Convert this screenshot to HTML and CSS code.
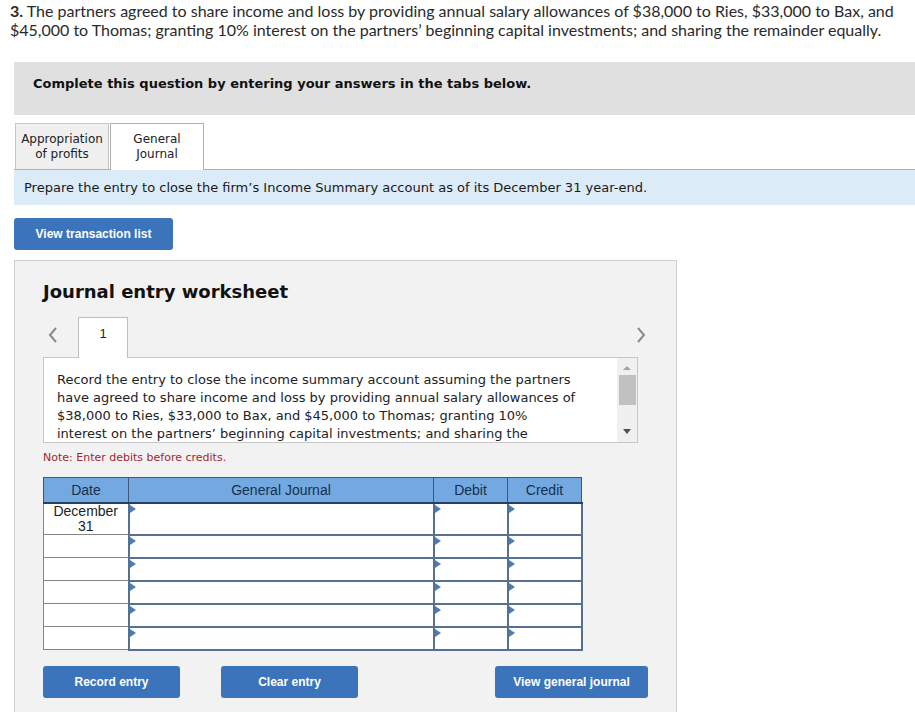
FILE: index.html
```html
<!DOCTYPE html>
<html lang="en">
<head>
  <meta charset="UTF-8">
  <title>Journal entry worksheet</title>
  <link rel="stylesheet" href="styles.css">
</head>
<body>

  <!-- Question text -->
  <p class="question"><b>3.</b> The partners agreed to share income and loss by providing annual salary allowances of $38,000 to Ries, $33,000 to Bax, and $45,000 to Thomas; granting 10% interest on the partners’ beginning capital investments; and sharing the remainder equally.</p>

  <div class="content">
    <div class="banner">Complete this question by entering your answers in the tabs below.</div>

    <!-- Tabs -->
    <div class="tabs">
      <div class="tab">Appropriation<br>of profits</div>
      <div class="tab active">General<br>Journal</div>
    </div>
    <div class="instructions">Prepare the entry to close the firm’s Income Summary account as of its December 31 year-end.</div>

    <button class="btn btn-list">View transaction list</button>

    <!-- Worksheet panel -->
    <div class="worksheet">
      <h2 class="ws-title">Journal entry worksheet</h2>

      <div class="pager">
        <span class="arrow">
          <svg width="10" height="16" viewBox="0 0 10 16"><path d="M8 1 L2 8 L8 15" fill="none" stroke="#8a8a8a" stroke-width="2"/></svg>
        </span>
        <div class="page-tab">1</div>
        <span class="arrow arrow-right">
          <svg width="10" height="16" viewBox="0 0 10 16"><path d="M2 1 L8 8 L2 15" fill="none" stroke="#8a8a8a" stroke-width="2"/></svg>
        </span>
      </div>

      <div class="textbox">
        <div class="textbox-text">Record the entry to close the income summary account assuming the partners have agreed to share income and loss by providing annual salary allowances of $38,000 to Ries, $33,000 to Bax, and $45,000 to Thomas; granting 10% interest on the partners’ beginning capital investments; and sharing the remainder equally.</div>
        <div class="scrollbar">
          <span class="sb-up"></span>
          <span class="sb-thumb"></span>
          <span class="sb-down"></span>
        </div>
      </div>

      <p class="note">Note: Enter debits before credits.</p>

      <table class="journal">
        <thead>
          <tr>
            <th class="col-date">Date</th>
            <th class="col-gj">General Journal</th>
            <th class="col-num">Debit</th>
            <th class="col-num">Credit</th>
          </tr>
        </thead>
        <tbody>
          <tr class="first">
            <td class="date">December<br>31</td>
            <td class="cell"></td><td class="cell"></td><td class="cell"></td>
          </tr>
          <tr><td class="date"></td><td class="cell"></td><td class="cell"></td><td class="cell"></td></tr>
          <tr><td class="date"></td><td class="cell"></td><td class="cell"></td><td class="cell"></td></tr>
          <tr><td class="date"></td><td class="cell"></td><td class="cell"></td><td class="cell"></td></tr>
          <tr><td class="date"></td><td class="cell"></td><td class="cell"></td><td class="cell"></td></tr>
          <tr><td class="date"></td><td class="cell"></td><td class="cell"></td><td class="cell"></td></tr>
        </tbody>
      </table>

      <div class="actions">
        <button class="btn btn-action">Record entry</button>
        <button class="btn btn-action btn-clear">Clear entry</button>
        <button class="btn btn-action btn-view">View general journal</button>
      </div>
    </div>
  </div>

</body>
</html>
```

FILE: styles.css
```css
body {
  margin: 0;
  background-color: #fff;
  color: #222;
  font-family: "DejaVu Sans", Verdana, sans-serif;
  overflow: hidden;
}

/* Question at the top */
.question {
  margin: 0;
  padding: 1px 10px 0 10px;
  font-family: Lato, "Liberation Sans", sans-serif;
  font-size: 16px;
  line-height: 19px;
  color: #2a2a2a;
}

.content {
  margin-left: 14px;
  margin-top: 23px;
}

.banner {
  background-color: #e0e0e0;
  height: 53px;
  line-height: 44px;
  padding-left: 19px;
  font-size: 13px;
  font-weight: bold;
  color: #111;
}

/* Tabs */
.tabs {
  display: flex;
  gap: 1px;
  margin-top: 8px;
  padding-left: 1px;
  border-bottom: 1px solid #b0b0b0;
}

.tab {
  width: 94px;
  height: 46px;
  padding-top: 8px;
  box-sizing: border-box;
  text-align: center;
  font-size: 12px;
  line-height: 15px;
  color: #222;
  background-color: #f0f0f0;
  border: 1px solid #c6c6c6;
  border-bottom: none;
}

.tab.active {
  background-color: #fff;
  border-color: #b0b0b0;
  height: 47px;
  margin-bottom: -1px;
}

.instructions {
  background-color: #dbebf7;
  height: 35px;
  line-height: 36px;
  padding-left: 10px;
  font-size: 13px;
  color: #1a1a1a;
}

/* Buttons */
.btn {
  display: block;
  border: none;
  border-radius: 3px;
  background-color: #3b74ba;
  color: #fff;
  font-family: "Liberation Sans", Arial, sans-serif;
  font-weight: bold;
  font-size: 12px;
  height: 32px;
  cursor: pointer;
}

.btn-list {
  margin-top: 13px;
  width: 159px;
}

/* Worksheet */
.worksheet {
  margin-top: 10px;
  width: 663px;
  box-sizing: border-box;
  background-color: #f2f2f2;
  border: 1px solid #cfcfcf;
  padding: 20px 0 20px 28px;
}

.ws-title {
  margin: 0;
  font-size: 18px;
  line-height: 22px;
  color: #111;
}

.pager {
  display: flex;
  align-items: center;
  margin-top: 14px;
  height: 40px;
}

.arrow {
  display: flex;
  width: 10px;
  margin-left: 5px;
  margin-right: 20px;
  margin-top: -4px;
}

.arrow-right {
  margin-left: auto;
  margin-right: 30px;
}

.page-tab {
  width: 50px;
  height: 41px;
  box-sizing: border-box;
  background-color: #fff;
  border: 1px solid #bdbdbd;
  border-bottom: none;
  text-align: center;
  padding-top: 8px;
  font-family: "Liberation Sans", Arial, sans-serif;
  font-size: 13px;
  position: relative;
  z-index: 1;
  margin-bottom: -1px;
}

.textbox {
  display: flex;
  width: 595px;
  height: 86px;
  box-sizing: border-box;
  background-color: #fff;
  border: 1px solid #c8c8c8;
  overflow: hidden;
}

.textbox-text {
  width: 521px;
  padding: 13px 0 0 13px;
  font-size: 13px;
  line-height: 18px;
  color: #222;
}

.scrollbar {
  margin-left: auto;
  width: 20px;
  background-color: #f0f0f0;
  display: flex;
  flex-direction: column;
  align-items: center;
}

.sb-up,
.sb-down {
  width: 0;
  height: 0;
  border-left: 4px solid transparent;
  border-right: 4px solid transparent;
}

.sb-up {
  margin-top: 8px;
  border-bottom: 4px solid #a3a3a3;
}

.sb-thumb {
  margin-top: 5px;
  width: 17px;
  height: 30px;
  background-color: #c1c1c1;
}

.sb-down {
  margin-top: auto;
  margin-bottom: 8px;
  border-top: 5px solid #505050;
}

.note {
  margin: 8px 0 0 0;
  font-size: 11px;
  line-height: 14px;
  color: #a1282e;
}

/* Journal table */
.journal {
  margin-top: 12px;
  border-collapse: collapse;
  font-family: "Liberation Sans", Arial, sans-serif;
  font-size: 13px;
}

.journal th {
  height: 24px;
  padding: 0;
  background-color: #73a9e0;
  color: #15304f;
  font-size: 14px;
  font-weight: normal;
  border: 1px solid #3f5877;
  border-bottom: 2px solid #26405f;
}

.col-date { width: 84px; }
.col-gj { width: 304px; }
.col-num { width: 73px; }

.journal td {
  height: 21px;
  padding: 0;
  background-color: #fff;
}

.journal tr.first td {
  height: 28px;
}

.journal td.date {
  border: 1px solid #858585;
  text-align: center;
  vertical-align: top;
  line-height: 15px;
  font-size: 14px;
  color: #222;
  padding-top: 0;
}

.journal td.cell {
  position: relative;
  border: 2px solid #56708f;
}

/* small marker at the corner of each input cell */
.journal td.cell::before {
  content: "";
  position: absolute;
  top: 1px;
  left: 0;
  border-top: 4px solid transparent;
  border-bottom: 4px solid transparent;
  border-left: 6px solid #4b7cb5;
}

.actions {
  display: flex;
  width: 605px;
  margin-top: 15px;
}

.btn-action {
  width: 137px;
}

.btn-clear {
  margin-left: 41px;
}

.btn-view {
  margin-left: auto;
  width: 153px;
}
```
